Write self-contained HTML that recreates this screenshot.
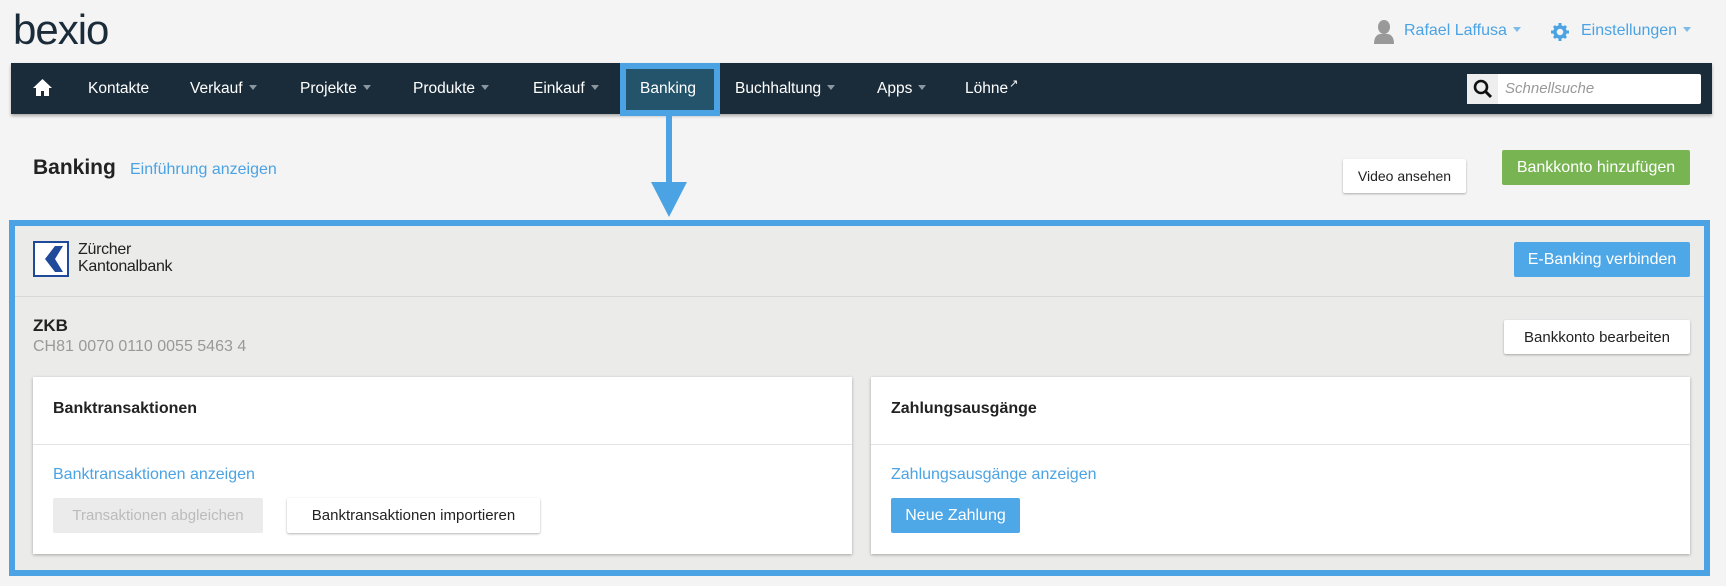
<!DOCTYPE html>
<html><head><meta charset="utf-8"><style>
*{margin:0;padding:0;box-sizing:border-box}
body{width:1726px;height:586px;background:#f4f4f4;font-family:"Liberation Sans",sans-serif;position:relative;overflow:hidden;color:#222}
.a{position:absolute}
.nav{left:11px;top:63px;width:1701px;height:51px;background:#1a2c3a;box-shadow:0 2px 3px rgba(0,0,0,.3)}
.ni{position:absolute;top:80px;color:#fff;font-size:15.5px;line-height:18px}
.car{display:inline-block;width:0;height:0;border-left:4px solid transparent;border-right:4px solid transparent;border-top:5px solid #8a96a0;margin-left:6px;vertical-align:3px}
.btn{position:absolute;display:flex;align-items:center;justify-content:center;font-size:15px;border-radius:2px}
.white{background:#fff;color:#222;box-shadow:0 1px 2px rgba(0,0,0,.3)}
.card{position:absolute;background:#fff;box-shadow:0 1px 3px rgba(0,0,0,.3)}
.link{color:#4ba3e3}
</style></head><body>
<div class="a" style="left:13px;top:6px;font-size:42px;color:#1a2c3a;letter-spacing:-1px">bexio</div>
<svg class="a" style="left:1373px;top:20px" width="22" height="24" viewBox="0 0 22 24"><ellipse cx="11" cy="7" rx="6" ry="7" fill="#999"/><path d="M1 24 C1 15 6 14 8 14 L14 14 C16 14 21 15 21 24Z" fill="#999"/></svg>
<div class="a link" style="left:1404px;top:22px;font-size:16px">Rafael Laffusa<span class="car" style="border-top-color:#4ba3e3;opacity:.7"></span></div>
<svg class="a" style="left:1551px;top:23px" width="18" height="18" viewBox="0 0 18 18"><circle cx="9" cy="9" r="5" fill="none" stroke="#4ba3e3" stroke-width="3.5"/><g stroke="#4ba3e3" stroke-width="3"><path d="M9 0v4M9 14v4M0 9h4M14 9h4M3 3l2.5 2.5M12.5 12.5L15 15M15 3l-2.5 2.5M5.5 12.5L3 15"/></g></svg>
<div class="a link" style="left:1581px;top:22px;font-size:16px">Einstellungen<span class="car" style="border-top-color:#4ba3e3;opacity:.7"></span></div>

<div class="a nav"></div>
<div class="a" style="left:620px;top:63px;width:100px;height:53px;background:#24546b;border:6px solid #4ba3e3"></div>
<svg class="a" style="left:33px;top:78px" width="19" height="18" viewBox="0 0 19 18"><path d="M9.5 1L0 10h3v8h5v-5h3v5h5v-8h3z" fill="#fff"/></svg>
<div class="ni" style="left:88px">Kontakte</div>
<div class="ni" style="left:190px">Verkauf<span class="car"></span></div>
<div class="ni" style="left:300px">Projekte<span class="car"></span></div>
<div class="ni" style="left:413px">Produkte<span class="car"></span></div>
<div class="ni" style="left:533px">Einkauf<span class="car"></span></div>
<div class="ni" style="left:640px">Banking</div>
<div class="ni" style="left:735px">Buchhaltung<span class="car"></span></div>
<div class="ni" style="left:877px">Apps<span class="car"></span></div>
<div class="ni" style="left:965px">Löhne<span style="font-size:11px;position:relative;top:-6px;margin-left:1px">&#x2197;</span></div>
<div class="a" style="left:1467px;top:74px;width:234px;height:30px;background:#fff;border-radius:2px"></div>
<div class="a" style="left:1467px;top:74px;width:31px;height:30px;background:#eee"></div>
<svg class="a" style="left:1473px;top:79px" width="20" height="20" viewBox="0 0 20 20"><circle cx="8" cy="8" r="6" fill="none" stroke="#111" stroke-width="2.6"/><path d="M12 12l6 6" stroke="#111" stroke-width="3"/></svg>
<div class="a" style="left:1505px;top:80px;font-size:15px;color:#999;font-style:italic">Schnellsuche</div>

<div class="a" style="left:666px;top:116px;width:6px;height:70px;background:#4ba3e3"></div>
<svg class="a" style="left:651px;top:182px" width="36" height="36" viewBox="0 0 36 36"><path d="M0 0H36L18 35Z" fill="#4ba3e3"/></svg>

<div class="a" style="left:33px;top:156px;font-size:21px;font-weight:bold">Banking</div>
<div class="a link" style="left:130px;top:161px;font-size:16px">Einführung anzeigen</div>
<div class="btn white" style="left:1343px;top:159px;width:123px;height:34px;font-size:14px">Video ansehen</div>
<div class="btn" style="left:1502px;top:150px;width:188px;height:35px;background:#78b552;color:#fff;font-size:16px">Bankkonto hinzufügen</div>

<div class="a" style="left:9px;top:220px;width:1701px;height:356px;background:#ebebea;border:6px solid #4ba3e3"></div>
<div class="a" style="left:15px;top:296px;width:1689px;height:1px;background:#d8d8d8"></div>
<svg class="a" style="left:33px;top:241px" width="36" height="36" viewBox="0 0 36 36"><rect x="1" y="1" width="34" height="34" fill="#fff" stroke="#1f4a9a" stroke-width="2"/><path d="M22 5L12 18L22 31H30L22 18L30 5Z" fill="#1f4a9a"/></svg>
<div class="a" style="left:78px;top:241px;font-size:16px;line-height:17px;color:#222;letter-spacing:-.3px">Zürcher<br>Kantonalbank</div>
<div class="btn" style="left:1514px;top:242px;width:176px;height:35px;background:#4ea8e8;color:#fff;font-size:16px">E-Banking verbinden</div>
<div class="a" style="left:33px;top:316px;font-size:17px;font-weight:bold">ZKB</div>
<div class="a" style="left:33px;top:338px;font-size:16px;color:#999">CH81 0070 0110 0055 5463 4</div>
<div class="btn white" style="left:1504px;top:320px;width:186px;height:34px">Bankkonto bearbeiten</div>

<div class="card" style="left:33px;top:377px;width:819px;height:177px"></div>
<div class="a" style="left:33px;top:444px;width:819px;height:1px;background:#e4e4e4"></div>
<div class="a" style="left:53px;top:400px;font-size:16px;font-weight:bold">Banktransaktionen</div>
<div class="a link" style="left:53px;top:466px;font-size:16px">Banktransaktionen anzeigen</div>
<div class="btn" style="left:53px;top:498px;width:210px;height:35px;background:#ebebeb;color:#bbb">Transaktionen abgleichen</div>
<div class="btn white" style="left:287px;top:498px;width:253px;height:35px">Banktransaktionen importieren</div>

<div class="card" style="left:871px;top:377px;width:819px;height:177px"></div>
<div class="a" style="left:871px;top:444px;width:819px;height:1px;background:#e4e4e4"></div>
<div class="a" style="left:891px;top:400px;font-size:16px;font-weight:bold">Zahlungsausgänge</div>
<div class="a link" style="left:891px;top:466px;font-size:16px">Zahlungsausgänge anzeigen</div>
<div class="btn" style="left:891px;top:498px;width:129px;height:35px;background:#4ea8e8;color:#fff;font-size:16px">Neue Zahlung</div>
</body></html>
